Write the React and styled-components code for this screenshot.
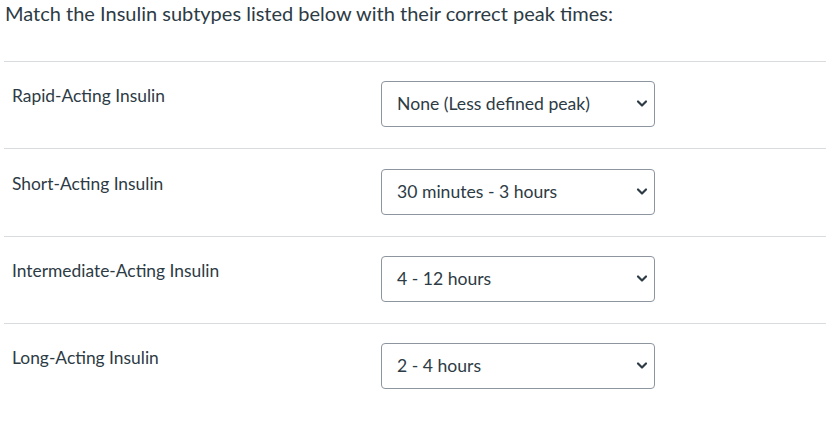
import React from "react";
import styled, { createGlobalStyle } from "styled-components";

const Global = createGlobalStyle`
  html, body { margin: 0; padding: 0; background: #fff; }
  body { font-family: Lato, "Open Sans", "Liberation Sans", sans-serif; color: #2d3b45; }
`;

const Page = styled.div`
  padding: 1px 1px 0 4px;
`;

const Title = styled.div`
  font-size: 20px;
  line-height: 24px;
  padding-left: 1px;
  margin-bottom: 36px;
  color: #2d3b45;
`;

const List = styled.div`
  display: flex;
  flex-direction: column;
`;

const Row = styled.div`
  display: flex;
  align-items: flex-start;
  border-top: 1px solid #d9dcdf;
  padding: 19px 0 ${(p) => (p.$last ? "39px" : "21px")} 8px;
  &:nth-child(2) { padding-top: 20px; }
`;

const Label = styled.div`
  width: 369px;
  font-size: 17.4px;
  line-height: 24px;
  padding-top: 2.5px;
`;

const SelectWrap = styled.div`
  position: relative;
  width: 274px;
  height: 46px;
`;

const Select = styled.select`
  appearance: none;
  -webkit-appearance: none;
  width: 100%;
  height: 100%;
  box-sizing: border-box;
  border: 1px solid #8d959f;
  border-radius: 4px;
  background: #fff;
  font-family: Lato, "Open Sans", "Liberation Sans", sans-serif;
  font-size: 17.6px;
  color: #2d3b45;
  padding: 0 30px 2px 15px;
  outline: none;
`;

const Chevron = styled.svg`
  position: absolute;
  right: 7px;
  top: 18px;
  width: 12px;
  height: 9px;
  pointer-events: none;
`;

const rows = [
  ["Rapid-Acting Insulin", "None (Less defined peak)"],
  ["Short-Acting Insulin", "30 minutes - 3 hours"],
  ["Intermediate-Acting Insulin", "4 - 12 hours"],
  ["Long-Acting Insulin", "2 - 4 hours"],
];

export default function App() {
  return (
    <Page>
      <Global />
      <Title>Match the Insulin subtypes listed below with their correct peak times:</Title>
      <List>
        {rows.map(([label, value], i) => (
          <Row key={label} $last={i === rows.length - 1}>
            <Label>{label}</Label>
            <SelectWrap>
              <Select defaultValue={value}>
                <option value={value}>{value}</option>
              </Select>
              <Chevron viewBox="0 0 12 9">
                <path d="M2 2.5 L6 6.5 L10 2.5" fill="none" stroke="#2d3b45" strokeWidth="2.2" strokeLinecap="round" strokeLinejoin="round" />
              </Chevron>
            </SelectWrap>
          </Row>
        ))}
      </List>
    </Page>
  );
}
